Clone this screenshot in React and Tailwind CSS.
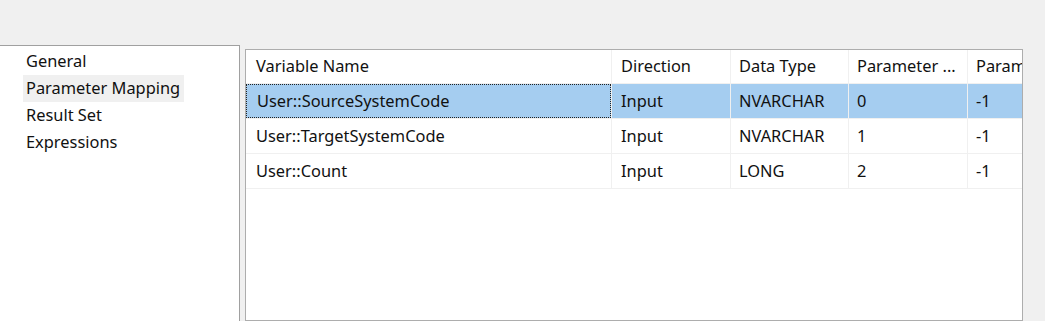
import React from 'react';

export default function App() {
  const navItems = ['General', 'Parameter Mapping', 'Result Set', 'Expressions'];
  const columns = [
    { label: 'Variable Name', w: 'w-[366px]', pad: 'pl-[10px]' },
    { label: 'Direction', w: 'w-[119px]', pad: 'pl-[9px]' },
    { label: 'Data Type', w: 'w-[118px]', pad: 'pl-[8px]' },
    { label: 'Parameter ...', w: 'w-[119px]', pad: 'pl-[8px]' },
    { label: 'Param', w: 'w-[54px]', pad: 'pl-[8px]' },
  ];
  const rows = [
    ['User::SourceSystemCode', 'Input', 'NVARCHAR', '0', '-1'],
    ['User::TargetSystemCode', 'Input', 'NVARCHAR', '1', '-1'],
    ['User::Count', 'Input', 'LONG', '2', '-1'],
  ];

  return (
    <div
      className="w-[1045px] h-[321px] bg-[#f0f0f0] overflow-hidden pt-[45px] flex text-[16.4px] text-[#111]"
      style={{ fontFamily: '"Noto Sans", "Open Sans", sans-serif' }}
    >
      {/* Page list */}
      <div className="w-[240px] shrink-0 bg-white border-t border-r border-[#a0a0a0] pt-[2px]">
        {navItems.map((item, i) => (
          <div
            key={item}
            className={`ml-[23px] w-fit h-[27px] pl-[3px] pr-[4px] flex items-center leading-none ${
              i === 1 ? 'bg-[#f0f0f0]' : ''
            }`}
          >
            {item}
          </div>
        ))}
      </div>

      {/* Parameter grid */}
      <div className="ml-[5px] mt-[4px] w-[778px] shrink-0 bg-white border border-[#adadad] overflow-hidden">
        <div className="flex h-[34px] border-b border-[#f0f0f0]">
          {columns.map((c, i) => (
            <div
              key={c.label}
              className={`${c.w} ${c.pad} shrink-0 flex items-center whitespace-nowrap overflow-hidden ${
                i < columns.length - 1 ? 'border-r border-[#f0f0f0]' : ''
              }`}
            >
              {c.label}
            </div>
          ))}
        </div>
        {rows.map((r, ri) => (
          <div
            key={r[0]}
            className={`flex h-[35px] border-b border-[#f0f0f0] ${ri === 0 ? 'bg-[#a5cdf0]' : ''}`}
          >
            {r.map((cell, ci) => (
              <div
                key={ci}
                className={`${columns[ci].w} shrink-0 whitespace-nowrap overflow-hidden ${
                  ci < columns.length - 1 ? 'border-r border-[#f0f0f0]' : ''
                }`}
              >
                <div
                  className={`h-full flex items-center ${columns[ci].pad} ${
                    ri === 0 && ci === 0 ? 'border border-dotted border-[#222]' : ''
                  }`}
                >
                  {cell}
                </div>
              </div>
            ))}
          </div>
        ))}
      </div>
    </div>
  );
}
